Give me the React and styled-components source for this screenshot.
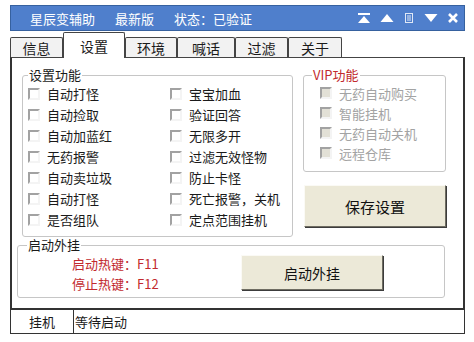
import React from "react";
import styled, { createGlobalStyle } from "styled-components";

const GlobalStyle = createGlobalStyle`
  body {
    margin: 0;
    background: #fff;
    font-family: "Noto Sans CJK SC", "Noto Sans", sans-serif;
  }
`;

const tabs = [
  { label: "信息", w: 53 },
  { label: "设置", w: 62, active: true },
  { label: "环境", w: 52 },
  { label: "喊话", w: 58 },
  { label: "过滤", w: 53 },
  { label: "关于", w: 54 },
];

const leftOptions = [
  "自动打怪", "自动捡取", "自动加蓝红", "无药报警", "自动卖垃圾", "自动打怪", "是否组队",
  "宝宝加血", "验证回答", "无限多开", "过滤无效怪物", "防止卡怪", "死亡报警，关机", "定点范围挂机",
];

const vipOptions = ["无药自动购买", "智能挂机", "无药自动关机", "远程仓库"];

const Window = styled.div`
  width: 455px;
  margin: 5px 0 0 10px;
  font-size: 13px;
  color: #1a1a1a;
`;

const TitleBar = styled.div`
  height: 26px;
  box-sizing: border-box;
  display: flex;
  align-items: center;
  gap: 20px;
  padding: 0 5px 0 19px;
  background: #4f7fcc;
  border: 1px solid #36619f;
  color: #fff;
  font-size: 13px;
`;

const TitleTools = styled.div`
  margin-left: auto;
  display: flex;
  align-items: center;
  gap: 9px;
`;

const TabRow = styled.div`
  display: flex;
  align-items: flex-end;
  height: 26px;
`;

const Tab = styled.div`
  position: relative;
  z-index: ${p => (p.$active ? 1 : 0)};
  width: ${p => p.$w}px;
  height: ${p => (p.$active ? 26 : 20)}px;
  box-sizing: border-box;
  margin-bottom: ${p => (p.$active ? -1 : 0)}px;
  display: flex;
  align-items: center;
  justify-content: center;
  border: 1px solid #444;
  border-bottom: none;
  border-radius: 2px 2px 0 0;
  background: ${p => (p.$active ? "#fff" : "#f2f2f2")};
  font-size: 14px;
`;

const Panel = styled.div`
  padding: 9px 0 10px;
  background: #fff;
  border-top: 1px solid #444;
  border-left: 2px solid #333;
  border-right: 2px solid #333;
`;

const TopRow = styled.div`
  display: flex;
  align-items: flex-start;
`;

const Group = styled.fieldset`
  margin: 0;
  min-width: 0;
  box-sizing: border-box;
  border: 1px solid #c6c6c6;
  border-radius: 3px;
  padding: 0 0 0 5px;
`;

const Caption = styled.legend`
  padding: 0 1px;
  line-height: 16px;
  font-size: 13px;
  color: ${p => (p.$red ? "#c22a2e" : "#1a1a1a")};
`;

const SettingsGroup = styled(Group)`
  width: 271px;
  height: 170px;
  margin-left: 10px;
`;

const OptionGrid = styled.div`
  display: grid;
  grid-template-columns: 142px 1fr;
  grid-template-rows: repeat(7, 21px);
  grid-auto-flow: column;
`;

const Option = styled.label`
  display: flex;
  align-items: center;
  gap: 7px;
  white-space: nowrap;
  color: ${p => (p.$disabled ? "#a3a3a3" : "#1a1a1a")};
`;

const Box = styled.span`
  flex: none;
  width: 12px;
  height: 12px;
  box-sizing: border-box;
  border: 2px solid;
  border-color: #a2a2a2 #f4f4f4 #f4f4f4 #a2a2a2;
  background: ${p => (p.$disabled ? "#e2e0d6" : "#fff")};
`;

const SideColumn = styled.div`
  width: 143px;
  margin-left: 10px;
  display: flex;
  flex-direction: column;
`;

const VipGroup = styled(Group)`
  width: 143px;
  height: 105px;
  padding-left: 8px;
`;

const VipList = styled.div`
  margin-left: 8px;
  display: grid;
  grid-auto-rows: 20px;
`;

const Button = styled.button`
  width: 142px;
  height: ${p => p.$h}px;
  box-sizing: border-box;
  border: 1px solid;
  border-color: #fbfaf5 #6f6d62 #6f6d62 #fbfaf5;
  box-shadow: 1px 1px 0 #3c3c3c;
  background: #ece9d8;
  font-family: inherit;
  font-size: ${p => p.$size}px;
  color: #111;
  padding: 0;
`;

const SaveButton = styled(Button)`
  margin: 13px 0 0 1px;
`;

const LaunchGroup = styled(Group)`
  width: 428px;
  height: 61px;
  margin-left: 5px;
  padding-left: 9px;
`;

const LaunchRow = styled.div`
  display: flex;
  align-items: flex-start;
`;

const HotKeys = styled.div`
  width: 169px;
  margin-left: 45px;
  display: grid;
  grid-auto-rows: 20px;
  align-items: center;
  color: #c22a2e;
`;

const LaunchButton = styled(Button)`
  margin-top: 2px;
`;

const StatusBar = styled.div`
  height: 26px;
  box-sizing: border-box;
  display: flex;
  border: 1px solid #333;
  border-top: 2px solid #333;
`;

const StatusCell = styled.div`
  width: 62px;
  display: flex;
  align-items: center;
  justify-content: center;
  border-right: 1px solid #333;
`;

const StatusText = styled.div`
  display: flex;
  align-items: center;
  padding-left: 1px;
`;

const ToTopIcon = () => (
  <svg width="14" height="12" viewBox="0 0 14 12">
    <rect x="1" y="1" width="12" height="2" fill="#fff" />
    <polygon points="7,4 13,11 1,11" fill="#fff" />
  </svg>
);

const UpIcon = () => (
  <svg width="14" height="12" viewBox="0 0 14 12">
    <polygon points="7,2 13.5,10 0.5,10" fill="#fff" />
  </svg>
);

const PageIcon = () => (
  <svg width="12" height="12" viewBox="0 0 12 12">
    <rect x="2.5" y="1.5" width="7" height="9" fill="none" stroke="#dfe8f6" strokeWidth="1" />
    <path d="M4 4h4M4 6h4M4 8h4" stroke="#dfe8f6" strokeWidth="1" />
  </svg>
);

const DownIcon = () => (
  <svg width="14" height="12" viewBox="0 0 14 12">
    <polygon points="0.5,2 13.5,2 7,10" fill="#fff" />
  </svg>
);

const CloseIcon = () => (
  <svg width="12" height="12" viewBox="0 0 12 12">
    <path d="M2 2L10 10M10 2L2 10" stroke="#fff" strokeWidth="2.6" />
  </svg>
);

const App = () => {
  return (
    <Window>
      <GlobalStyle />
      <TitleBar>
        <span>星辰变辅助</span>
        <span>最新版</span>
        <span>状态：已验证</span>
        <TitleTools>
          <ToTopIcon />
          <UpIcon />
          <PageIcon />
          <DownIcon />
          <CloseIcon />
        </TitleTools>
      </TitleBar>

      <TabRow>
        {tabs.map(t => (
          <Tab key={t.label} $w={t.w} $active={t.active}>{t.label}</Tab>
        ))}
      </TabRow>

      <Panel>
        <TopRow>
          <SettingsGroup>
            <Caption>设置功能</Caption>
            <OptionGrid>
              {leftOptions.map((o, i) => (
                <Option key={i}><Box />{o}</Option>
              ))}
            </OptionGrid>
          </SettingsGroup>

          <SideColumn>
            <VipGroup>
              <Caption $red>VIP功能</Caption>
              <VipList>
                {vipOptions.map(o => (
                  <Option key={o} $disabled><Box $disabled />{o}</Option>
                ))}
              </VipList>
            </VipGroup>
            <SaveButton $h={42} $size={15}>保存设置</SaveButton>
          </SideColumn>
        </TopRow>

        <LaunchGroup>
          <Caption>启动外挂</Caption>
          <LaunchRow>
            <HotKeys>
              <span>启动热键：F11</span>
              <span>停止热键：F12</span>
            </HotKeys>
            <LaunchButton $h={35} $size={14}>启动外挂</LaunchButton>
          </LaunchRow>
        </LaunchGroup>
      </Panel>

      <StatusBar>
        <StatusCell>挂机</StatusCell>
        <StatusText>等待启动</StatusText>
      </StatusBar>
    </Window>
  );
};

export default App;
